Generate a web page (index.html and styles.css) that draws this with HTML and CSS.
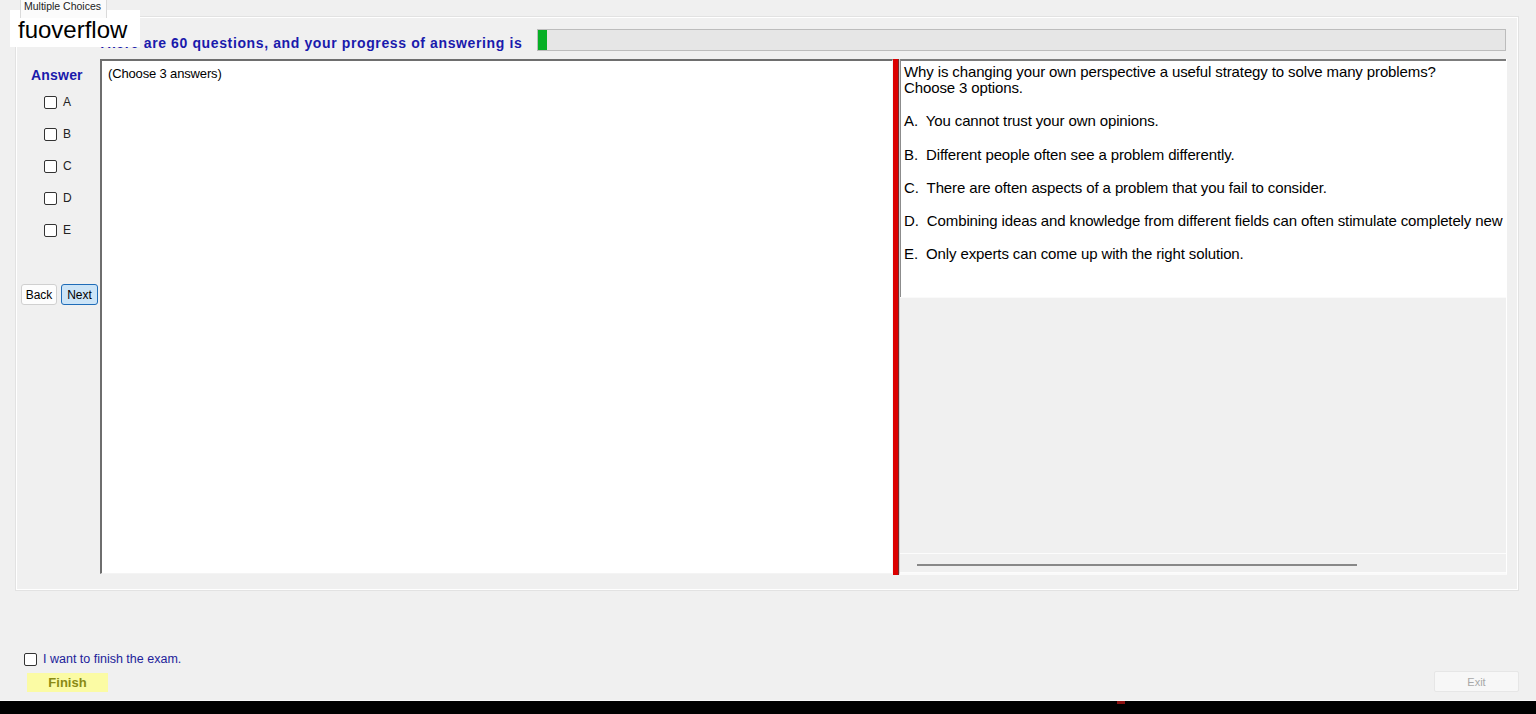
FILE: index.html
```html
<!DOCTYPE html>
<html lang="en">
<head>
  <meta charset="UTF-8">
  <meta name="viewport" content="width=device-width, initial-scale=1.0">
  <title>Multiple Choices</title>
  <link rel="stylesheet" href="styles.css">
</head>
<body>
  <div class="window">
    <div class="tab">Multiple Choices</div>
    <div class="page">
      <div class="progress-row">
        <div class="progress-title">There are 60 questions, and your progress of answering is</div>
        <div class="progress-bar"><div class="progress-fill" style="width: 9px"></div></div>
      </div>

      <div class="main">
        <div class="answer-col">
          <div class="answer-title">Answer</div>
          <label class="choice"><input type="checkbox"> A</label>
          <label class="choice"><input type="checkbox"> B</label>
          <label class="choice"><input type="checkbox"> C</label>
          <label class="choice"><input type="checkbox"> D</label>
          <label class="choice"><input type="checkbox"> E</label>
          <div class="nav">
            <button class="btn">Back</button>
            <button class="btn btn-next">Next</button>
          </div>
        </div>

        <div class="answer-box">(Choose 3 answers)</div>
        <div class="splitter"></div>

        <div class="question-pane">
          <div class="question-text">
            <p class="question">Why is changing your own perspective a useful strategy to solve many problems?<br>Choose 3 options.</p>
            <p class="opt opt-first">A.  You cannot trust your own opinions.</p>
            <p class="opt">B.  Different people often see a problem differently.</p>
            <p class="opt">C.  There are often aspects of a problem that you fail to consider.</p>
            <p class="opt">D.  Combining ideas and knowledge from different fields can often stimulate completely new</p>
            <p class="opt">E.  Only experts can come up with the right solution.</p>
          </div>
          <div class="question-space"></div>
          <div class="hscroll"><div class="hscroll-thumb"></div></div>
        </div>
      </div>
    </div>

    <div class="finish-area">
      <label class="finish-check"><input type="checkbox"> I want to finish the exam.</label>
      <div class="finish-row">
        <button class="btn-finish">Finish</button>
        <button class="btn-exit">Exit</button>
      </div>
    </div>
  </div>

  <div class="taskbar"><span class="taskbar-mark"></span></div>

  <div class="brand">fuoverflow</div>
</body>
</html>
```

FILE: styles.css
```css
body {
  margin: 0;
  background: #f0f0f0;
  font-family: "Liberation Sans", Arial, sans-serif;
  color: #000;
  height: 714px;
  overflow: hidden;
  display: flex;
  flex-direction: column;
}
.window {
  flex: 1;
  display: flex;
  flex-direction: column;
}
.tab {
  margin-left: 20px;
  width: 87px;
  height: 18px;
  box-sizing: border-box;
  background: #fbfbfb;
  border: 1px solid #dadada;
  border-top: none;
  border-bottom: none;
  font-size: 10.5px;
  line-height: 12px;
  padding-left: 3px;
  color: #222;
  position: relative;
  z-index: 1;
  margin-bottom: -1px;
}
.page {
  margin-left: 16px;
  width: 1502px;
  height: 573px;
  box-sizing: border-box;
  border: 1px solid #fff;
  box-shadow: 0 0 0 1px #e2e2e2;
  padding: 11px 10px 0 0;
}
.progress-row {
  display: flex;
  align-items: flex-end;
  height: 22px;
}
.progress-title {
  width: 439px;
  padding-left: 81px;
  font-size: 14px;
  letter-spacing: 0.62px;
  font-weight: bold;
  line-height: 16px;
  color: #1a1aac;
  white-space: nowrap;
}
.progress-bar {
  flex: 1;
  height: 22px;
  box-sizing: border-box;
  background: #e6e6e6;
  border: 1px solid #bcbcbc;
  margin-right: 1px;
}
.progress-fill {
  height: 100%;
  background: #06b025;
}
.main {
  display: flex;
  margin-top: 8px;
  height: 516px;
}
.answer-col {
  width: 83px;
  display: flex;
  flex-direction: column;
  padding-top: 8px;
}
.answer-title {
  font-size: 14px;
  letter-spacing: 0.2px;
  font-weight: bold;
  color: #1a1aac;
  line-height: 16px;
  padding-left: 14px;
  margin-bottom: 3px;
}
.choice {
  display: flex;
  align-items: center;
  height: 32px;
  padding-left: 27px;
  font-size: 12px;
  color: #222;
  gap: 6px;
}
input[type="checkbox"] {
  appearance: none;
  margin: 0;
  width: 13px;
  height: 13px;
  box-sizing: border-box;
  border: 1px solid #333;
  border-radius: 2px;
  background: #fff;
}
.nav {
  display: flex;
  gap: 4px;
  margin-top: 38px;
  padding-left: 4px;
}
.btn {
  height: 21px;
  width: 36px;
  padding: 0;
  font-family: inherit;
  font-size: 12px;
  background: #fdfdfd;
  border: 1px solid #d0d0d0;
  border-radius: 3px;
  color: #000;
}
.btn-next {
  width: 37px;
  background: #cce4f7;
  border-color: #1f6cb8;
}
.answer-box {
  width: 793px;
  height: 515px;
  box-sizing: border-box;
  background: #fff;
  border-style: solid;
  border-width: 2px 1px 1px 2px;
  border-color: #6e6e6e #f4f4f4 #f4f4f4 #6e6e6e;
  padding: 5px 6px;
  font-size: 13px;
  letter-spacing: -0.15px;
  line-height: 15px;
}
.splitter {
  width: 6px;
  box-sizing: border-box;
  background: #dc0000;
  border-right: 1px solid #7a2a2a;
}
.question-pane {
  width: 608px;
  display: flex;
  flex-direction: column;
  box-sizing: border-box;
  border-left: 1px solid #d0d0d0;
  border-right: 1px solid #fff;
  border-bottom: 2px solid #fafafa;
}
.question-text {
  height: 238px;
  box-sizing: border-box;
  background: #fff;
  border-top: 2px solid #7c7c7c;
  border-left: 1px solid #8c8c8c;
  padding: 3px 0 0 3px;
  font-size: 15px;
  letter-spacing: -0.12px;
  line-height: 16px;
  overflow: hidden;
}
.question-text p {
  margin: 0;
  white-space: pre;
}
.question-text .opt {
  margin-top: 17px;
}
.question-text .opt-first + .opt {
  margin-top: 18px;
}
.question-space {
  flex: 1;
  border-top: 1px solid #fafafa;
}
.hscroll {
  height: 18px;
  border-top: 1px solid #fcfcfc;
  border-bottom: 1px solid #fcfcfc;
}
.hscroll-thumb {
  margin: 10px 0 0 17px;
  width: 440px;
  height: 2px;
  background: #888;
}
.finish-area {
  margin-top: 61px;
  padding-left: 24px;
}
.finish-check {
  display: flex;
  align-items: center;
  gap: 6px;
  height: 16px;
  font-size: 12.5px;
  color: #22229a;
}
.finish-row {
  display: flex;
  align-items: flex-end;
  justify-content: space-between;
  margin-top: 4px;
  height: 21px;
}
.btn-finish {
  margin-left: 3px;
  width: 81px;
  height: 19px;
  padding: 0;
  border: none;
  background: #fbfba4;
  font-family: inherit;
  font-size: 13px;
  font-weight: bold;
  color: #8a8a14;
}
.btn-exit {
  width: 85px;
  height: 21px;
  margin-right: 17px;
  padding: 0;
  background: #f7f7f7;
  border: 1px solid #e6e6e6;
  border-radius: 2px;
  font-family: inherit;
  font-size: 11px;
  color: #a8a8a8;
}
.taskbar {
  height: 13px;
  background: #000;
  border-top: 1px solid #f8f8f8;
  display: flex;
  align-items: flex-start;
}
.taskbar-mark {
  margin-left: 1117px;
  width: 8px;
  height: 3px;
  background: #8a1010;
}
.brand {
  position: absolute;
  left: 10px;
  top: 10px;
  width: 130px;
  height: 37px;
  box-sizing: border-box;
  background: #fff;
  padding: 4px 0 0 8px;
  font-size: 24px;
  line-height: 31px;
  color: #000;
}
```
